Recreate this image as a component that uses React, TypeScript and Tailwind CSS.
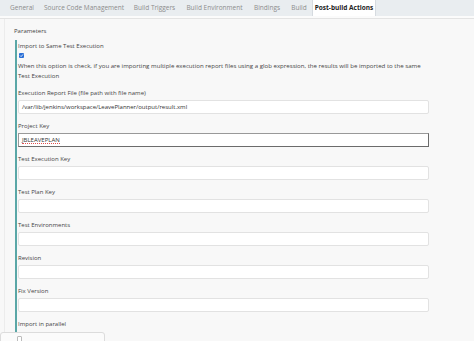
const tabs = [
  { label: "General", w: "w-[36px]" },
  { label: "Source Code Management", w: "w-[88px]" },
  { label: "Build Triggers", w: "w-[53px]" },
  { label: "Build Environment", w: "w-[67px]" },
  { label: "Bindings", w: "w-[38px]" },
  { label: "Build", w: "w-[26px]" },
];

const fields = [
  { label: "Execution Report File (file path with file name)", value: "/var/lib/jenkins/workspace/LeavePlanner/output/result.xml" },
  { label: "Project Key", value: "JBLEAVEPLAN", focused: true },
  { label: "Test Execution Key", value: "" },
  { label: "Test Plan Key", value: "" },
  { label: "Test Environments", value: "" },
  { label: "Revision", value: "" },
  { label: "Fix Version", value: "" },
];

function Field({ label, value, focused }: { label: string; value: string; focused?: boolean }) {
  return (
    <div>
      <div className="h-[19px] pt-[8px] text-[6px] leading-[8px] text-[#444]">{label}</div>
      <div
        className={
          "h-[14px] w-[411px] bg-white flex items-center pl-[3px] text-[6px] text-[#333] " +
          (focused ? "border border-[#6b6b6b] border-t-[#999] border-l-[#999]" : "border border-[#e2e2e2] rounded-[2px]")
        }
      >
        {focused ? (
          <span className="border-b border-dotted border-[#e05050] leading-[6px]">{value}</span>
        ) : (
          value
        )}
      </div>
    </div>
  );
}

export default function App() {
  return (
    <div className="w-[474px] h-[341px] overflow-hidden bg-[#f8f8f8] relative font-['Open_Sans',sans-serif]">
      {/* tab strip */}
      <div className="h-[16px] flex bg-[#e9edf0] text-[6.5px] text-[#8c8c8c]">
        <div className="w-[4px]" />
        {tabs.map((t) => (
          <div key={t.label} className={"flex items-center justify-center " + t.w}>
            {t.label}
          </div>
        ))}
        <div className="w-[64px] bg-white border-x border-[#d6dbe0] flex items-center justify-center font-bold text-[#222]">
          Post-build Actions
        </div>
      </div>
      <div className="h-[2px] bg-[#fbfbfb]" />
      <div className="h-[1px] bg-[#e3e3e3]" />

      <div className="border-l border-[#ececec] ml-[4px] h-full">
        <div className="pl-[9px] pt-[8px] text-[6px] leading-[8px] text-[#444]">Parameters</div>
        <div className="ml-[10px] mt-[5px] border-l-2 border-[#5aa7a7] pl-[1px] pb-[10px]">
          <div className="pt-[2px] text-[6px] leading-[8px] text-[#444]">Import to Same Test Execution</div>
          <div className="mt-[3px] w-[5px] h-[5px] bg-[#2a6fd6] rounded-[1px] ml-[1px] flex items-center justify-center">
            <svg viewBox="0 0 10 10" className="w-[5px] h-[5px]">
              <path d="M2 5 L4.2 7.2 L8 2.8" stroke="white" strokeWidth="1.6" fill="none" />
            </svg>
          </div>
          <div className="mt-[3px] text-[6.1px] leading-[10px] text-[#444] w-[405px]">
            When this option is check, if you are importing multiple execution report files using a glob expression, the results will be imported to the same Test Execution
          </div>
          {fields.map((f) => (
            <Field key={f.label} {...f} />
          ))}
          <div className="h-[19px] pt-[8px] text-[6px] leading-[8px] text-[#444]">Import in parallel</div>
        </div>
      </div>

      {/* partially visible box at bottom */}
      <div className="absolute left-0 top-[332px] w-[105px] h-[12px] border border-[#dcdcdc] rounded-[3px] bg-[#fbfbfb]">
        <div className="ml-[16px] mt-[3px] w-[5px] h-[6px] border border-[#bbb] rounded-[1px] bg-white" />
      </div>
    </div>
  );
}
